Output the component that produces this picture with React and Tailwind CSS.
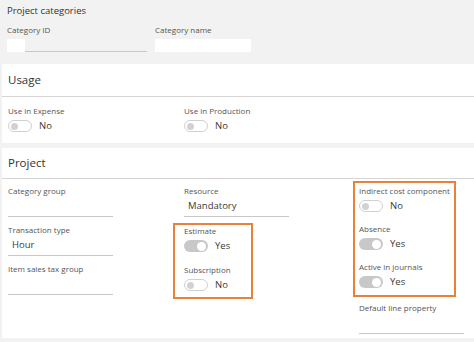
import React from "react";

const font = { fontFamily: '"Open Sans", "Noto Sans", sans-serif' };

function Toggle({ on, text }) {
  return (
    <div className="flex items-center gap-[7px] h-[12px]">
      {on ? (
        <div className="w-[24px] h-[12px] rounded-full bg-[#c8c8c8] flex items-center justify-end pr-[2px]">
          <div className="w-[9px] h-[9px] rounded-full bg-white" />
        </div>
      ) : (
        <div className="w-[24px] h-[12px] rounded-full border border-[#d0d0d0] bg-white flex items-center pl-[2px]">
          <div className="w-[7px] h-[7px] rounded-full bg-[#d2d2d2]" />
        </div>
      )}
      <span className="text-[9.5px] text-[#3a3a3a] leading-[12px]">{text}</span>
    </div>
  );
}

function Label({ children }) {
  return <div className="text-[8px] leading-[12px] text-[#555] whitespace-nowrap">{children}</div>;
}

function Field({ label, value }) {
  return (
    <div className="flex flex-col">
      <Label>{label}</Label>
      <div className="w-[105px] h-[20px] border-b border-[#c8c8c8] flex items-center pl-[4px] text-[9.5px] text-[#3a3a3a]">
        {value}
      </div>
    </div>
  );
}

function ToggleField({ label, on, text }) {
  return (
    <div className="flex flex-col gap-[3px]">
      <Label>{label}</Label>
      <Toggle on={on} text={text} />
    </div>
  );
}

export default function App() {
  return (
    <div className="w-[474px] h-[342px] overflow-hidden bg-[#f2f2f2]" style={font}>
      {/* Header */}
      <div className="h-[64px] px-[7px] pt-[4px]">
        <div className="text-[9.5px] leading-[14px] text-[#333]">Project categories</div>
        <div className="mt-[6px] grid grid-cols-[148px_1fr]">
          <div>
            <Label>Category ID</Label>
            <div className="w-[140px] h-[16px] border-b border-[#c8c8c8] pt-[3px]">
              <div className="w-[18px] h-[13px] bg-white" />
            </div>
          </div>
          <div>
            <Label>Category name</Label>
            <div className="pt-[3px]">
              <div className="w-[96px] h-[13px] bg-white" />
            </div>
          </div>
        </div>
      </div>

      {/* Usage */}
      <div className="ml-[2px] bg-white h-[79px]">
        <div className="h-[33px] border-b border-[#d4d4d4] flex items-center px-[6px] text-[11.5px] text-[#333]">
          Usage
        </div>
        <div className="pt-[8px] pl-[6px] grid grid-cols-[176px_1fr]">
          <ToggleField label="Use in Expense" on={false} text="No" />
          <ToggleField label="Use in Production" on={false} text="No" />
        </div>
      </div>

      {/* Project */}
      <div className="mt-[5px] ml-[2px] bg-white h-[190px]">
        <div className="h-[31px] border-b border-[#d4d4d4] flex items-center px-[6px] text-[11.5px] text-[#333]">
          Project
        </div>
        <div className="pt-[6px] pl-[6px] grid grid-cols-[176px_175px_1fr]">
          <div className="flex flex-col gap-[7px]">
            <Field label="Category group" value="" />
            <Field label="Transaction type" value="Hour" />
            <Field label="Item sales tax group" value="" />
          </div>
          <div className="flex flex-col">
            <Field label="Resource" value="Mandatory" />
            <div className="relative mt-[7px] flex flex-col gap-[12px] pt-[1px]">
              <div className="absolute left-[-11px] top-[-1px] w-[80px] h-[76px] border-2 border-[#e8823a]" />
              <ToggleField label="Estimate" on={true} text="Yes" />
              <ToggleField label="Subscription" on={false} text="No" />
            </div>
          </div>
          <div className="flex flex-col">
            <div className="relative flex flex-col gap-[11px]">
              <div className="absolute left-[-6px] top-[-4px] w-[103px] h-[116px] border-2 border-[#e8823a]" />
              <ToggleField label="Indirect cost component" on={false} text="No" />
              <ToggleField label="Absence" on={true} text="Yes" />
              <ToggleField label="Active in journals" on={true} text="Yes" />
            </div>
            <div className="mt-[14px]">
              <Field label="Default line property" value="" />
            </div>
          </div>
        </div>
      </div>
    </div>
  );
}
